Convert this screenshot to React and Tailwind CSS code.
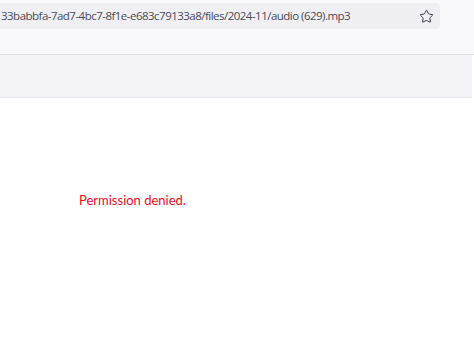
import { Star } from "lucide-react"

const App = () => {
    return (
        <div className="w-[474px] h-[338px] bg-white overflow-hidden font-['Lato','Open_Sans',sans-serif]">
            <div className="h-[55px] bg-[#f9f9fb] border-b border-[#e0e0e6] pt-[3px]">
                <div className="w-[440px] h-[26px] bg-[#f0f0f4] rounded-r-[4px] flex items-center justify-between pl-[1px] pr-[6px]">
                    <span className="font-['Open_Sans',sans-serif] text-[11.5px] tracking-[-0.52px] text-[#4a4a55] whitespace-nowrap">
                        33babbfa-7ad7-4bc7-8f1e-e683c79133a8/files/2024-11/audio (629).mp3
                    </span>
                    <Star className="w-[15px] h-[15px] text-[#3a3a44]" strokeWidth={1.6} />
                </div>
            </div>
            <div className="h-[43px] w-[472px] bg-[#f3f3f7] border-b border-[#e8e8ec]"></div>
            <div className="pt-[93px] pl-[79px]">
                <p className="text-[13px] text-[#ee0a1e]">Permission denied.</p>
            </div>
        </div>
    )
}

export default App
